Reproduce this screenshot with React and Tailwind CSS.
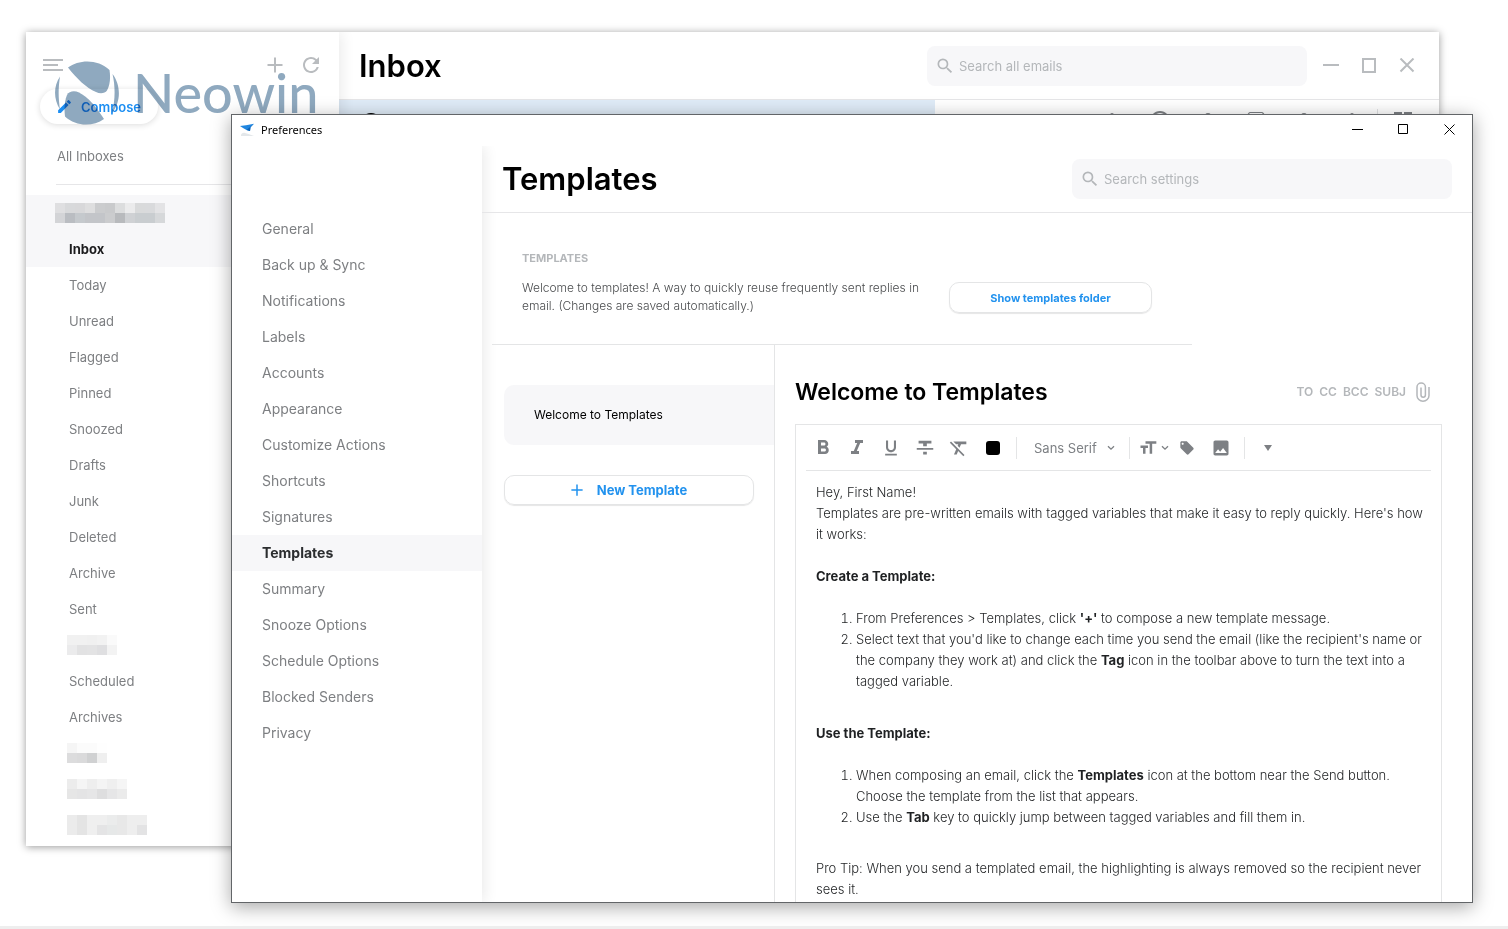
import React, { useState } from 'react';
import {
  MdAccessTime,
  MdArchive,
  MdEdit,
  MdFormatBold,
  MdFormatClear,
  MdFormatItalic,
  MdFormatSize,
  MdFormatStrikethrough,
  MdFormatUnderlined,
  MdGridView,
  MdImage,
  MdLocalOffer,
  MdMoreVert,
  MdPerson,
  MdRefresh,
  MdSearch,
} from 'react-icons/md';

const HIDDEN_ACCOUNT = [
  ['bg-[#dfdfe1]', 'bg-[#d8d9db]', 'bg-[#d8d8da]', 'bg-[#dededf]', 'bg-[#cbccce]', 'bg-[#c9cacc]', 'bg-[#dcddde]', 'bg-[#ebebec]', 'bg-[#d9dadb]', 'bg-[#d9dadc]', 'bg-[#e3e3e5]'],
  ['bg-[#d3d4d7]', 'bg-[#babdc2]', 'bg-[#c5c9cd]', 'bg-[#c3c5c9]', 'bg-[#c3c5c9]', 'bg-[#cbccce]', 'bg-[#b8babd]', 'bg-[#cfd1d4]', 'bg-[#c9cdd0]', 'bg-[#c9cdd0]', 'bg-[#d6d8da]'],
];

const FOLDERS = [
  { name: 'Inbox' },
  { name: 'Today' },
  { name: 'Unread' },
  { name: 'Flagged' },
  { name: 'Pinned' },
  { name: 'Snoozed' },
  { name: 'Drafts' },
  { name: 'Junk' },
  { name: 'Deleted' },
  { name: 'Archive' },
  { name: 'Sent' },
  {
    cells: [
      ['bg-[#f1f1f1]', 'bg-[#f1f1f1]', 'bg-[#f0f0f0]', 'bg-[#f2f2f2]', 'bg-[#fafafa]'],
      ['bg-[#ebebec]', 'bg-[#e2e2e3]', 'bg-[#e3e3e4]', 'bg-[#dfdfe1]', 'bg-[#f3f3f3]'],
    ],
  },
  { name: 'Scheduled' },
  { name: 'Archives' },
  {
    cells: [
      ['bg-[#f5f5f5]', 'bg-[#fbfbfb]', 'bg-[#fbfbfb]', 'bg-[#fefefe]'],
      ['bg-[#dcdcdd]', 'bg-[#dadadb]', 'bg-[#d0d1d2]', 'bg-[#efefef]'],
    ],
  },
  {
    cells: [
      ['bg-[#ececec]', 'bg-[#f5f5f5]', 'bg-[#eeeeee]', 'bg-[#f4f4f4]', 'bg-[#efefef]', 'bg-[#f5f5f5]'],
      ['bg-[#e6e6e6]', 'bg-[#e4e4e5]', 'bg-[#e6e6e7]', 'bg-[#dededf]', 'bg-[#e6e6e7]', 'bg-[#ebebeb]'],
    ],
  },
  {
    cells: [
      ['bg-[#ebebeb]', 'bg-[#e4e4e4]', 'bg-[#efefef]', 'bg-[#efefef]', 'bg-[#ebecec]', 'bg-[#e8e8e8]', 'bg-[#eeeeee]', 'bg-[#eeeeee]'],
      ['bg-[#ebebeb]', 'bg-[#e4e4e4]', 'bg-[#efefef]', 'bg-[#e4e4e5]', 'bg-[#e6e8e8]', 'bg-[#e8e8e8]', 'bg-[#eeeeee]', 'bg-[#e3e3e4]'],
    ],
  },
];

const SETTINGS = [
  'General',
  'Back up & Sync',
  'Notifications',
  'Labels',
  'Accounts',
  'Appearance',
  'Customize Actions',
  'Shortcuts',
  'Signatures',
  'Templates',
  'Summary',
  'Snooze Options',
  'Schedule Options',
  'Blocked Senders',
  'Privacy',
];

const FORMAT_BUTTONS = [
  { label: 'Bold', Icon: MdFormatBold, size: 'size-6' },
  { label: 'Italic', Icon: MdFormatItalic, size: 'size-6' },
  { label: 'Underline', Icon: MdFormatUnderlined, size: 'size-5' },
  { label: 'Strikethrough', Icon: MdFormatStrikethrough, size: 'size-[22px]' },
  { label: 'Clear formatting', Icon: MdFormatClear, size: 'size-[22px]' },
];

const MAIL_ACTIONS = [MdMoreVert, MdAccessTime, MdPerson, MdArchive, MdPerson, MdMoreVert];

const Pixelated = ({ rows }) => (
  <div className="flex flex-col">
    {rows.map((row, i) => (
      <div key={i} className="flex">
        {row.map((color, j) => (
          <div key={j} className={`size-[10px] ${color}`} />
        ))}
      </div>
    ))}
  </div>
);

const SearchBox = ({ label }) => (
  <div className="flex h-10 w-[380px] items-center gap-1 rounded-lg bg-[#f7f7f9] px-2">
    <MdSearch className="size-5 shrink-0 text-[#b4b7ba]" />
    <input
      type="text"
      aria-label={label}
      placeholder={label}
      className="h-5 w-full bg-transparent text-[13px] leading-5 text-[#333] outline-none placeholder:text-[#b4b7ba]"
    />
  </div>
);

const Plus = ({ className }) => (
  <svg viewBox="0 0 16 16" className={className} stroke="currentColor" strokeWidth="2">
    <path d="M8 .5v15M.5 8h15" />
  </svg>
);

const Chevron = () => (
  <svg viewBox="0 0 8 6" className="h-[6px] w-2 shrink-0" fill="none" stroke="#7d8084" strokeWidth="1.3">
    <path d="M1 1.2 4 4.2 7 1.2" />
  </svg>
);

const NeowinMark = () => (
  <div className="pointer-events-none absolute left-[55px] top-[60px] z-10 flex items-center gap-[14px] text-[#8fa9bf] mix-blend-multiply">
    <svg viewBox="0 0 64 64" className="size-16" fill="currentColor">
      <path d="M13 6.500C24-1.800 43-2.200 54.500 9c1.200 8 .5 15-2.500 20.500-2 3-7 3.500-11 1.500C31 26.500 22 18 13 6.500Z" />
      <path d="M49 58C38 65.800 21 65.800 10 55.500 9 48 9.500 40 12 34c2-4 7.500-4.500 12-2.500C33 36 41 45.500 49 58Z" />
      <path d="M5 15.500C-1.500 25-1.700 38 5 48.500 3.200 37 3.200 27 5 15.500Z" />
      <path d="M57.500 13C66 24 66.200 41 57 52c3.200-13 3.500-26 .5-39Z" />
    </svg>
    <span className="font-[Lato,sans-serif] text-[54px] font-medium leading-[66px]">Neowin</span>
  </div>
);

const MailSidebar = () => (
  <aside className="z-10 flex w-[313px] shrink-0 flex-col bg-white shadow-[2px_0_14px_rgba(0,0,0,0.09)]">
    <div className="flex h-[57px] items-center pl-[17px] pr-4 pt-[9px] text-[#b9bcbf]">
      <button aria-label="Menu" className="mr-auto">
        <svg viewBox="0 0 20 14" className="h-[14px] w-5" stroke="currentColor" strokeWidth="2">
          <path d="M0 2h20M0 7h15M0 12h20" />
        </svg>
      </button>
      <button aria-label="Add account" className="mr-4">
        <Plus className="size-4" />
      </button>
      <button aria-label="Refresh">
        <MdRefresh className="size-6" />
      </button>
    </div>

    <button className="ml-[14px] flex h-[35px] w-[118px] items-center gap-2 rounded-full bg-white pl-4 text-[13px] font-semibold leading-5 text-[#1c8ef2] shadow-[0_1px_6px_rgba(0,0,0,0.14)]">
      <MdEdit className="size-[17px]" />
      Compose
    </button>

    <a href="#all" className="mt-3 flex h-10 items-center pl-[31px] text-[13px] leading-5 text-[#7d7f82]">
      All Inboxes
    </a>
    <div className="ml-[30px] mt-2 h-px bg-[#e6e6e8]" />

    <div className="mt-[10px] flex h-9 items-center bg-[#f7f7f9] pl-[29px]">
      <Pixelated rows={HIDDEN_ACCOUNT} />
    </div>
    <nav className="flex flex-col">
      {FOLDERS.map((folder, i) =>
        folder.cells ? (
          <div key={i} className="flex h-9 items-center pl-[41px]">
            <Pixelated rows={folder.cells} />
          </div>
        ) : (
          <a
            key={i}
            href="#folder"
            className={`flex h-9 items-center pl-[43px] text-[13px] leading-5 ${
              folder.name === 'Inbox' ? 'bg-[#f7f7f9] font-bold text-[#1b1b1d]' : 'text-[#7d7f82]'
            }`}
          >
            {folder.name}
          </a>
        )
      )}
    </nav>
  </aside>
);

const MailWindow = () => (
  <div className="absolute bottom-20 left-[26px] right-[69px] top-8 isolate flex overflow-hidden bg-white shadow-[0_1px_8px_rgba(0,0,0,0.4)]">
    <MailSidebar />
    <main className="flex min-w-0 flex-1 flex-col">
      <header className="flex h-[68px] items-center border-b border-[#e6e6e8] pl-5 pr-6">
        <h1 className="mr-auto text-[31px] font-semibold leading-10 text-black">Inbox</h1>
        <SearchBox label="Search all emails" />
        <div className="ml-4 flex items-center gap-[22px] text-[#b9bcbf]">
          <button aria-label="Minimize">
            <svg viewBox="0 0 16 16" className="size-4" stroke="currentColor" strokeWidth="2">
              <path d="M0 7h16" />
            </svg>
          </button>
          <button aria-label="Maximize">
            <svg viewBox="0 0 16 16" className="size-4" fill="none" stroke="currentColor" strokeWidth="2">
              <path d="M2 1h12v13H2z" />
            </svg>
          </button>
          <button aria-label="Close">
            <svg viewBox="0 0 16 16" className="size-4" stroke="currentColor" strokeWidth="2">
              <path d="m1.500.5 13 13m0-13-13 13" />
            </svg>
          </button>
        </div>
      </header>
      <div className="flex flex-1">
        <div className="w-[596px] shrink-0">
          <div className="flex h-20 bg-[#dfebf7] pl-5 pt-[13px]">
            <div className="size-6 rounded-full bg-black" />
          </div>
        </div>
        <div className="flex h-12 flex-1 items-start justify-end pr-6 pt-[9px] text-[#7d8084]">
          <div className="flex gap-6">
            {MAIL_ACTIONS.map((Icon, i) => (
              <Icon key={i} className="size-6" />
            ))}
          </div>
          <div className="mx-[13px] h-8 w-px bg-[#e0e1e3]" />
          <MdGridView className="size-6" />
        </div>
      </div>
    </main>
  </div>
);

const TitleBar = () => (
  <div className="flex h-[31px] shrink-0 items-center pb-[2px] pl-2">
    <svg viewBox="0 0 16 14" className="h-[14px] w-4">
      <path d="M0 3 6 2.200 14 .8 10.500 4.300 10 8 6.500 7 3 5Z" fill="#1f86e0" />
      <path d="m14 .8-3.500 3.500L10 8 6.500 7Z" fill="#0d62b5" />
      <path d="M1 12.500c0-2 2-3 4-2.500L8.500 11l5.500 2H1Z" fill="#e3e7ea" />
    </svg>
    <span className="ml-[5px] mr-auto font-['Noto_Sans',sans-serif] text-[11px] leading-4 text-black">Preferences</span>
    <button aria-label="Minimize" className="flex h-full w-[46px] items-center justify-center">
      <svg viewBox="0 0 11 11" className="size-[11px]" stroke="#000">
        <path d="M0 5.500h11" />
      </svg>
    </button>
    <button aria-label="Maximize" className="flex h-full w-[46px] items-center justify-center">
      <svg viewBox="0 0 11 11" className="size-[11px]" fill="none" stroke="#000">
        <path d="M.5.5h9v9h-9z" />
      </svg>
    </button>
    <button aria-label="Close" className="flex h-full w-[46px] items-center justify-center">
      <svg viewBox="0 0 11 11" className="size-[11px]" stroke="#000">
        <path d="m.5.5 10 10m0-10-10 10" />
      </svg>
    </button>
  </div>
);

const EditorToolbar = () => (
  <div className="mx-[10px] flex h-[46px] items-center border-b border-[#e4e5e6] text-[#7d8084]">
    <div className="flex items-center gap-[10px] pl-[5px]">
      {FORMAT_BUTTONS.map(({ label, Icon, size }) => (
        <button key={label} aria-label={label} className="flex size-6 items-center justify-center">
          <Icon className={size} />
        </button>
      ))}
      <button aria-label="Text color" className="flex size-6 items-center justify-center">
        <span className="size-[14px] rounded-[3px] bg-black" />
      </button>
    </div>
    <div className="ml-[11px] h-[22px] w-px bg-[#e4e5e6]" />
    <button className="ml-[17px] flex items-center gap-[10px] text-[13px] leading-5">
      Sans Serif
      <Chevron />
    </button>
    <div className="ml-[14px] h-[22px] w-px bg-[#e4e5e6]" />
    <button aria-label="Font size" className="ml-2 flex items-center gap-[3px]">
      <MdFormatSize className="size-5" />
      <Chevron />
    </button>
    <button aria-label="Tag" className="ml-[10px]">
      <MdLocalOffer className="size-4" />
    </button>
    <button aria-label="Insert image" className="ml-4">
      <MdImage className="size-5" />
    </button>
    <div className="ml-[13px] h-[22px] w-px bg-[#e4e5e6]" />
    <button aria-label="More" className="ml-[19px]">
      <svg viewBox="0 0 8 6" className="h-[6px] w-2" fill="currentColor">
        <path d="M0 0h8L4 6Z" />
      </svg>
    </button>
  </div>
);

const TemplateBody = () => (
  <div className="pl-5 pr-3 pt-[11px] text-[13px] font-light leading-[21px] text-[#1f2123]">
    <p>Hey, First Name!</p>
    <p>
      Templates are pre-written emails with tagged variables that make it easy to reply quickly. Here's how it works:
    </p>
    <p className="mt-[21px] font-bold">Create a Template:</p>
    <ol className="mt-[21px] list-decimal pl-10">
      <li>
        From Preferences &gt; Templates, click <b className="font-bold">'+'</b> to compose a new template message.
      </li>
      <li>
        Select text that you'd like to change each time you send the email (like the recipient's name or the company
        they work at) and click the <b className="font-bold">Tag</b> icon in the toolbar above to turn the text into a
        tagged variable.
      </li>
    </ol>
    <p className="mt-[31px] font-bold">Use the Template:</p>
    <ol className="mt-[21px] list-decimal pl-10">
      <li>
        When composing an email, click the <b className="font-bold">Templates</b> icon at the bottom near the Send
        button. Choose the template from the list that appears.
      </li>
      <li>
        Use the <b className="font-bold">Tab</b> key to quickly jump between tagged variables and fill them in.
      </li>
    </ol>
    <p className="mt-[30px]">
      Pro Tip: When you send a templated email, the highlighting is always removed so the recipient never sees it.
    </p>
  </div>
);

const TemplatesPanel = () => (
  <main className="flex min-w-0 flex-1 flex-col">
    <header className="flex h-[67px] shrink-0 items-center border-b border-[#e6e6e8] px-5">
      <h2 className="mr-auto text-[31px] font-semibold leading-10 text-black">Templates</h2>
      <SearchBox label="Search settings" />
    </header>

    <section className="ml-[10px] flex h-[132px] w-[700px] shrink-0 border-b border-[#e4e5e6] pl-[30px]">
      <div className="w-[410px] pt-[37px]">
        <h3 className="text-[11px] font-bold leading-4 text-[#b4b7ba]">TEMPLATES</h3>
        <p className="mt-[13px] text-[12px] font-light leading-[18px] text-[#4a4c4e]">
          Welcome to templates! A way to quickly reuse frequently sent replies in email. (Changes are saved
          automatically.)
        </p>
      </div>
      <button className="ml-[17px] mt-[69px] h-[31px] w-[203px] rounded-[10px] border border-[#e4e5e6] text-[11px] font-bold leading-4 text-[#2292ee] shadow-[0_1px_1px_rgba(0,0,0,0.1)]">
        Show templates folder
      </button>
    </section>

    <div className="flex min-h-0 flex-1">
      <div className="ml-[10px] flex w-[283px] shrink-0 flex-col border-r border-[#e4e5e6] pl-3 pt-10">
        <button className="flex h-[60px] items-center rounded-l-[10px] bg-[#f7f7f9] pl-[30px] text-[12px] leading-5 text-black">
          Welcome to Templates
        </button>
        <button className="mr-5 mt-[30px] flex h-[30px] items-center justify-center gap-[14px] rounded-[10px] border border-[#e4e5e6] text-[13px] font-bold leading-5 text-[#2292ee] shadow-[0_1px_1px_rgba(0,0,0,0.1)]">
          <Plus className="size-3" />
          New Template
        </button>
      </div>

      <div className="flex min-w-0 flex-1 flex-col pl-5 pr-[30px] pt-[31px]">
        <div className="flex h-8 shrink-0 items-center">
          <h3 className="mr-auto text-[23px] font-semibold leading-8 text-black">Welcome to Templates</h3>
          <div className="flex items-center gap-[6px] pr-3 text-[12px] font-semibold leading-4 text-[#b4b7ba]">
            <button>TO</button>
            <button>CC</button>
            <button>BCC</button>
            <button>SUBJ</button>
            <button aria-label="Attach file" className="ml-1">
              <svg viewBox="0 0 14 20" className="h-5 w-[14px]" fill="none" stroke="currentColor" strokeWidth="1.500">
                <path d="M13 5v8.500a6 5.700 0 0 1-12 0V5a4.200 4 0 0 1 8.400 0v8a2.200 2.200 0 0 1-4.400 0V5.500" />
              </svg>
            </button>
          </div>
        </div>
        <div className="mt-4 min-h-0 flex-1 overflow-hidden border border-b-0 border-[#e4e5e6]">
          <EditorToolbar />
          <TemplateBody />
        </div>
      </div>
    </div>
  </main>
);

const PreferencesWindow = () => {
  const [active, setActive] = useState('Templates');

  return (
    <div className="absolute bottom-[23px] left-[231px] right-[35px] top-[114px] z-20 flex flex-col overflow-hidden border border-[#626568] bg-white shadow-[0_4px_18px_rgba(0,0,0,0.35)]">
      <TitleBar />
      <div className="flex min-h-0 flex-1 overflow-hidden">
        <nav className="flex w-[250px] shrink-0 flex-col pt-[65px] shadow-[2px_0_14px_rgba(0,0,0,0.09)]">
          {SETTINGS.map((item) => (
            <button
              key={item}
              onClick={() => setActive(item)}
              className={`flex h-9 items-center pl-[30px] text-[14px] leading-5 ${
                item === active ? 'bg-[#f7f7f9] font-bold text-[#2b2d2f]' : 'text-[#7d7f82]'
              }`}
            >
              {item}
            </button>
          ))}
        </nav>
        <TemplatesPanel />
      </div>
    </div>
  );
};

export default function App() {
  return (
    <div className="relative min-h-screen overflow-hidden border-b-[3px] border-[#eeeeee] bg-white font-[Inter,sans-serif]">
      <MailWindow />
      <NeowinMark />
      <PreferencesWindow />
    </div>
  );
}
